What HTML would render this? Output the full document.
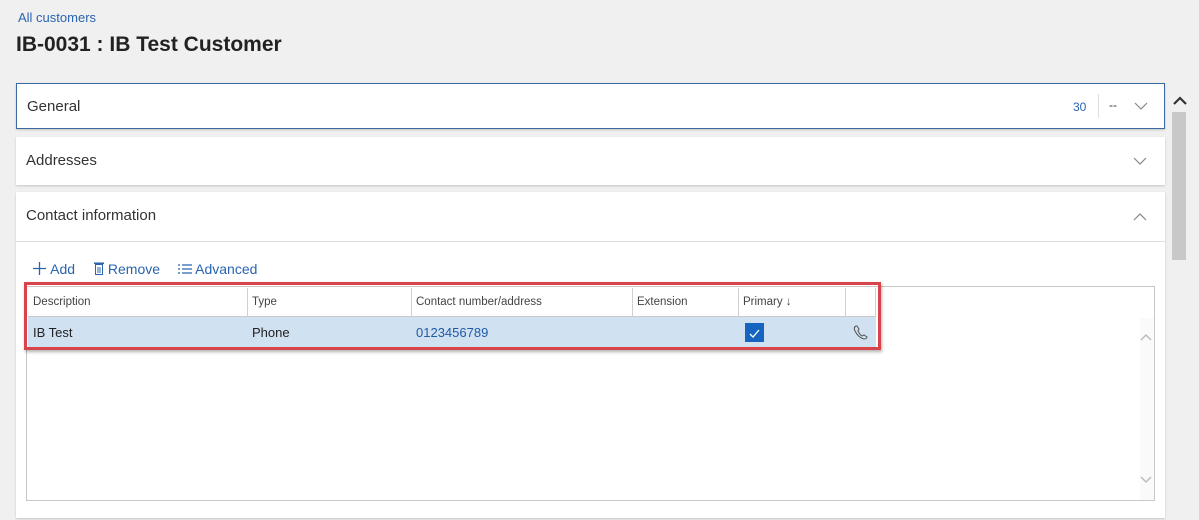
<!DOCTYPE html>
<html><head><style>
body{margin:0;width:1199px;height:520px;background:#f0f0f0;font-family:"Liberation Sans",sans-serif;position:relative;overflow:hidden}
.a{position:absolute}
.sec{position:absolute;left:16px;width:1149px;background:#fff;box-shadow:0 1px 2px rgba(0,0,0,.18)}
.t{position:absolute;left:10px;font-size:15px;color:#333}
.hc{position:absolute;top:0;height:29px;line-height:29px;font-size:11.5px;color:#444;padding-left:5px;box-sizing:border-box;border-right:1px solid #d0d0d0}
.dc{position:absolute;top:29px;height:31px;line-height:31px;font-size:13px;color:#222;padding-left:5px;box-sizing:border-box;border-right:1px solid #c0c8d4;background:#d0e1f1}
.tb{position:absolute;top:261px;font-size:14px;color:#2a64b0;white-space:nowrap}
</style></head><body>
<div class="a" style="left:18px;top:10px;font-size:13px;color:#2a64b0">All customers</div>
<div class="a" style="left:16px;top:33px;font-size:21px;color:#222;font-weight:bold">IB-0031 : IB Test Customer</div>

<div class="sec" style="top:83px;height:46px;border:1px solid #3b6aa0;box-sizing:border-box">
<div class="t" style="top:14px">General</div>
<div class="a" style="left:1056px;top:16px;font-size:12px;color:#2a64b0">30</div>
<div class="a" style="left:1081px;top:10px;width:1px;height:24px;background:#ddd"></div>
<div class="a" style="left:1092px;top:14px;font-size:12px;color:#333">--</div>
<svg class="a" style="left:1117px;top:18px" width="14" height="9"><path d="M1 1l6 6 6-6" fill="none" stroke="#888" stroke-width="1.2"/></svg>
</div>
<div class="sec" style="top:137px;height:48px">
<div class="t" style="top:15px">Addresses</div>
<svg class="a" style="left:1117px;top:20px" width="14" height="9"><path d="M1 1l6 6 6-6" fill="none" stroke="#888" stroke-width="1.2"/></svg>
</div>
<div class="sec" style="top:192px;height:326px">
<div class="t" style="top:15px">Contact information</div>
<svg class="a" style="left:1117px;top:20px" width="14" height="9"><path d="M1 8l6-6 6 6" fill="none" stroke="#888" stroke-width="1.2"/></svg>
<div class="a" style="left:0;top:49px;width:1149px;height:1px;background:#ddd"></div>
</div>
<div class="tb" style="left:32px"><svg width="15" height="15" style="vertical-align:-2px"><path d="M7.5 1v13M1 7.5h13" stroke="#2a64b0" stroke-width="1.3"/></svg> Add</div>
<div class="tb" style="left:94px"><svg width="10" height="13" style="vertical-align:-1px"><rect x="1.5" y="2.5" width="7" height="10" fill="none" stroke="#2a64b0"/><rect x="0" y="0.5" width="10" height="1.5" fill="#2a64b0"/><path d="M4 5v6M6 5v6" stroke="#2a64b0"/></svg> Remove</div>
<div class="tb" style="left:178px"><svg width="14" height="10" style="vertical-align:0"><path d="M0 1h2M4 1h10M0 5h2M4 5h10M0 9h2M4 9h10" stroke="#2a64b0" stroke-width="1.3"/></svg> Advanced</div>

<div class="a" style="left:26px;top:286px;width:1129px;height:215px;border:1px solid #c8c8c8;box-sizing:border-box;background:#fff"></div>
<div class="a" style="left:1140px;top:318px;width:14px;height:182px;background:#fafafa"></div>
<svg class="a" style="left:1140px;top:333px" width="13" height="9"><path d="M1 7l5-5 5 5" fill="none" stroke="#bbb" stroke-width="1.5"/></svg>
<svg class="a" style="left:1140px;top:475px" width="13" height="9"><path d="M1 2l5 5 5-5" fill="none" stroke="#bbb" stroke-width="1.5"/></svg>

<div class="a" style="left:28px;top:288px;width:848px;height:60px;background:#fff">
<div class="hc" style="left:0;width:220px">Description</div>
<div class="hc" style="left:219px;width:165px">Type</div>
<div class="hc" style="left:383px;width:222px">Contact number/address</div>
<div class="hc" style="left:604px;width:107px">Extension</div>
<div class="hc" style="left:710px;width:108px">Primary ↓</div>
<div class="hc" style="left:817px;width:31px"></div>
<div class="a" style="left:0;top:28px;width:848px;height:1px;background:#c8c8c8"></div>
<div class="dc" style="left:0;width:220px">IB Test</div>
<div class="dc" style="left:219px;width:165px">Phone</div>
<div class="dc" style="left:383px;width:222px;color:#1f5aa6">0123456789</div>
<div class="dc" style="left:604px;width:107px"></div>
<div class="dc" style="left:710px;width:108px"><div class="a" style="left:7px;top:6px;width:19px;height:19px;background:#1565c0"><svg width="19" height="19"><path d="M5 10l3 3 6-7" fill="none" stroke="#fff" stroke-width="1.3"/></svg></div></div>
<div class="dc" style="left:817px;width:31px;border-right:none"><svg class="a" style="left:8px;top:8px" width="15" height="15"><path d="M3 1c-2 1-2 3-1 5 2 4 5 7 9 8 2 0 3-1 3-2l-3-2-2 1c-2-1-3-3-4-5l1-2-2-3z" fill="none" stroke="#555" stroke-width="1"/></svg></div>
</div>
<div class="a" style="left:24px;top:282px;width:857px;height:68px;border:3px solid #d9434a;box-sizing:border-box;box-shadow:1px 2px 3px rgba(0,0,0,.3)"></div>

<div class="a" style="left:1170px;top:90px;width:20px;height:430px;background:#f0f0f0"></div>
<svg class="a" style="left:1173px;top:96px" width="14" height="10"><path d="M1 8l6-6 6 6" fill="none" stroke="#333" stroke-width="2.2"/></svg>
<div class="a" style="left:1172px;top:112px;width:14px;height:148px;background:#c8c8c8"></div>
</body></html>
